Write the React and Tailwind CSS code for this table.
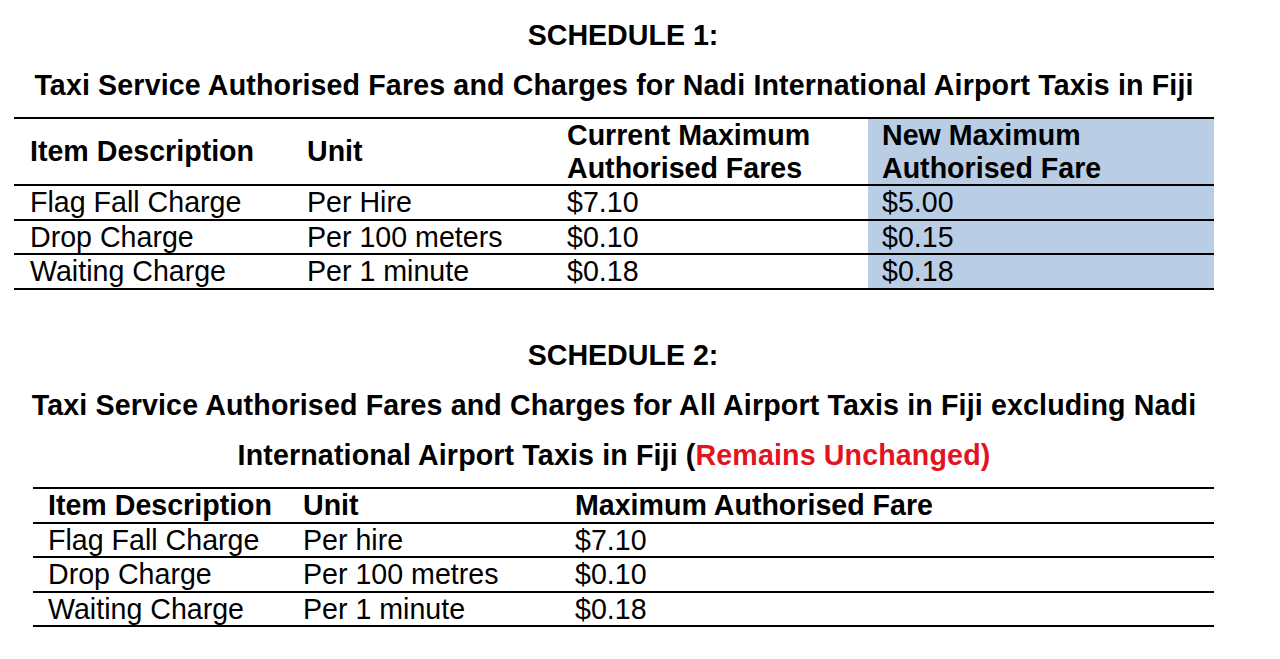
import React from "react";

const rows1 = [
  ["Flag Fall Charge", "Per Hire", "$7.10", "$5.00"],
  ["Drop Charge", "Per 100 meters", "$0.10", "$0.15"],
  ["Waiting Charge", "Per 1 minute", "$0.18", "$0.18"],
];

const rows2 = [
  ["Flag Fall Charge", "Per hire", "$7.10"],
  ["Drop Charge", "Per 100 metres", "$0.10"],
  ["Waiting Charge", "Per 1 minute", "$0.18"],
];

export default function App() {
  return (
    <div className="w-[1280px] h-[659px] bg-white overflow-hidden text-black font-['Liberation_Sans',Arial,sans-serif] text-[28.6px]">
      <div className="ml-[14px] w-[1200px] pt-[10px]">
        <div className="text-center font-bold leading-[50px] pl-[18px]">SCHEDULE 1:</div>
        <div className="text-center font-bold leading-[50px] whitespace-nowrap tracking-[0.14px]">
          Taxi Service Authorised Fares and Charges for Nadi International Airport Taxis in Fiji
        </div>

        <div className="mt-[7px] border-t-2 border-black">
          <div className="flex border-b-2 border-black font-bold leading-[32.5px]">
            <div className="w-[277px] pl-[16px] flex items-center">Item Description</div>
            <div className="w-[260px] pl-[16px] flex items-center">Unit</div>
            <div className="w-[317px] pl-[16px]">
              Current Maximum
              <br />
              Authorised Fares
            </div>
            <div className="w-[346px] pl-[14px] bg-[#b9cde5]">
              New Maximum
              <br />
              Authorised Fare
            </div>
          </div>
          {rows1.map((r, i) => (
            <div key={i} className="flex border-b-2 border-black leading-[32.7px]">
              <div className="w-[277px] pl-[16px]">{r[0]}</div>
              <div className="w-[260px] pl-[16px]">{r[1]}</div>
              <div className="w-[317px] pl-[16px]">{r[2]}</div>
              <div className="w-[346px] pl-[14px] bg-[#b9cde5]">{r[3]}</div>
            </div>
          ))}
        </div>

        <div className="mt-[40px] text-center font-bold leading-[50px] pl-[18px]">SCHEDULE 2:</div>
        <div className="text-center font-bold leading-[50px] whitespace-nowrap tracking-[0.14px]">
          Taxi Service Authorised Fares and Charges for All Airport Taxis in Fiji excluding Nadi
          <br />
          International Airport Taxis in Fiji (<span className="text-[#e3141f]">Remains Unchanged)</span>
        </div>

        <div className="mt-[7px] ml-[19px] w-[1181px] border-t-2 border-black">
          <div className="flex border-b-2 border-black font-bold leading-[32.7px]">
            <div className="w-[255px] pl-[15px]">Item Description</div>
            <div className="w-[272px] pl-[15px]">Unit</div>
            <div className="w-[654px] pl-[15px]">Maximum Authorised Fare</div>
          </div>
          {rows2.map((r, i) => (
            <div key={i} className="flex border-b-2 border-black leading-[32.5px]">
              <div className="w-[255px] pl-[15px]">{r[0]}</div>
              <div className="w-[272px] pl-[15px]">{r[1]}</div>
              <div className="w-[654px] pl-[15px]">{r[2]}</div>
            </div>
          ))}
        </div>
      </div>
    </div>
  );
}
